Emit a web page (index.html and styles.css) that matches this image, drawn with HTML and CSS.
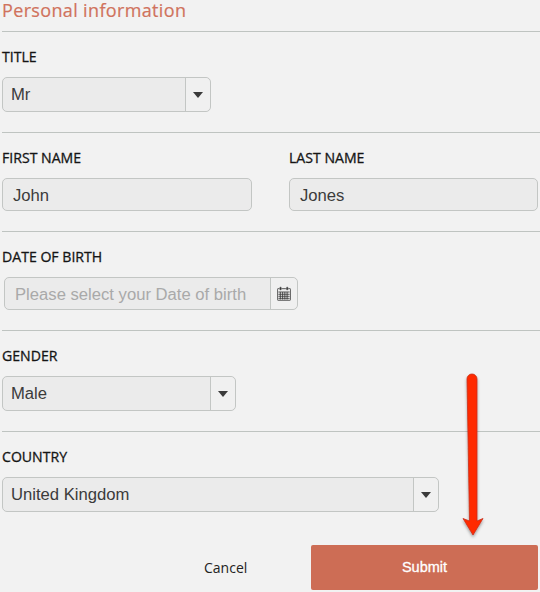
FILE: index.html
```html
<!DOCTYPE html>
<html lang="en">
<head>
<meta charset="utf-8">
<title>Personal information</title>
<link rel="stylesheet" href="styles.css">
</head>
<body>
<form class="form">
  <h2 class="heading">Personal information</h2>
  <section class="section s-title">
    <div class="label">Title</div>
    <div class="select w-title"><span class="value">Mr</span><span class="toggle"><i class="caret"></i></span></div>
  </section>
  <section class="section s-name">
    <div class="two">
      <div class="col-a">
        <div class="label">First name</div>
        <div class="input w-first"><span class="value-plain">John</span></div>
      </div>
      <div class="col-b">
        <div class="label">Last name</div>
        <div class="input w-last"><span class="value-plain">Jones</span></div>
      </div>
    </div>
  </section>
  <section class="section s-dob">
    <div class="label">Date of birth</div>
    <div class="date">
      <span class="placeholder">Please select your Date of birth</span>
      <span class="cal">
        <svg width="14" height="15" viewBox="0 0 13 14" aria-hidden="true">
          <path class="cal-body" d="M1 2.500h11a.7.7 0 0 1 .7.7v9.400a.7.7 0 0 1-.7.7H1a.7.7 0 0 1-.7-.7V3.200a.7.7 0 0 1 .7-.7z"/>
          <path class="cal-grid" d="M1.200 5.600h10.600M1.200 7.700h10.600M1.200 9.600h10.600M1.200 11.500h10.600M3.100 5.600v7M5.200 5.600v7M7.300 5.600v7M9.400 5.600v7"/>
          <rect class="cal-ring" x="2.300" y="0.800" width="2" height="3.200" rx="1"/>
          <rect class="cal-ring" x="8.500" y="0.800" width="2" height="3.200" rx="1"/>
        </svg>
      </span>
    </div>
  </section>
  <section class="section s-gender">
    <div class="label">Gender</div>
    <div class="select w-gender"><span class="value">Male</span><span class="toggle"><i class="caret"></i></span></div>
  </section>
  <section class="section s-country">
    <div class="label">Country</div>
    <div class="select w-country"><span class="value">United Kingdom</span><span class="toggle"><i class="caret"></i></span></div>
  </section>
  <div class="actions">
    <span class="cancel">Cancel</span>
    <span class="submit">Submit</span>
  </div>
</form>
<svg class="arrow" width="40" height="180" viewBox="0 0 40 180" aria-hidden="true">
  <defs>
    <filter id="shadow" x="-50%" y="-10%" width="200%" height="120%">
      <feDropShadow dx="0" dy="2" stdDeviation="1.500" flood-color="#000" flood-opacity="0.35"/>
    </filter>
  </defs>
  <path class="arrow-shape" filter="url(#shadow)" d="M15 9 a5 5 0 0 1 10 0 L25 151 L31 148.500 L21 165 L11 148.500 L17.500 151 Z"/>
</svg>
</body>
</html>
```
FILE: styles.css
```css
* { box-sizing: border-box; }
html, body { margin: 0; padding: 0; }
body {
  width: 540px;
  height: 592px;
  overflow: hidden;
  position: relative;
  background: #f2f2f2;
  font-family: "Open Sans", sans-serif;
  color: #111;
}
.form { padding-left: 2px; }
.heading {
  margin: 0;
  height: 32px;
  font-size: 18px;
  line-height: 21px;
  font-weight: 400;
  letter-spacing: 0.35px;
  color: #d0735d;
  border-bottom: 1px solid #bfc4c1;
  -webkit-text-stroke: 0.200px #d0735d;
}
.section { border-bottom: 1px solid #bfc4c1; }
.section.s-country { border-bottom: 0; }
.s-title { height: 101px; padding-top: 16px; }
.s-name { height: 99px; padding-top: 16px; }
.s-dob { height: 99px; padding-top: 16px; }
.s-gender { height: 101px; padding-top: 16px; }
.s-country { height: 113px; padding-top: 16px; }
.label {
  height: 18px;
  margin-bottom: 11px;
  font-size: 14.100px;
  line-height: 18px;
  font-weight: 400;
  text-transform: uppercase;
  color: #151515;
  -webkit-text-stroke: 0.300px #151515;
}
.two { display: flex; }
.col-a { width: 287px; }
.col-b { width: 249px; }
.select, .input, .date {
  display: flex;
  align-items: center;
  background: #ebebeb;
  border: 1px solid #c3c6c4;
  border-radius: 5px;
  font-family: "Liberation Sans", Arial, sans-serif;
  font-size: 16.650px;
  color: #3b3b3b;
}
.select { height: 35px; }
.value { flex: 1; padding: 1px 0 0 8px; }
.value-plain { padding-top: 2px; }
.toggle {
  width: 25px;
  height: 100%;
  display: flex;
  align-items: center;
  justify-content: center;
  border-left: 1px solid #c3c6c4;
  background: #f0f0f0;
  border-radius: 0 5px 5px 0;
}
.caret {
  display: block;
  width: 0;
  height: 0;
  border-left: 5.500px solid transparent;
  border-right: 5.500px solid transparent;
  border-top: 6px solid #3a3a3a;
}
.w-title { width: 209px; }
.w-gender { width: 234px; }
.w-country { width: 437px; }
.input { height: 33px; padding-left: 10px; }
.w-first { width: 250px; }
.w-last { width: 249px; }
.date {
  width: 294px;
  height: 33px;
  margin-left: 2px;
}
.placeholder { flex: 1; padding: 2px 0 0 10px; color: #a9a9a9; }
.cal {
  width: 27px;
  height: 100%;
  display: flex;
  align-items: center;
  justify-content: center;
  border-left: 1px solid #c3c6c4;
  background: #f0f0f0;
  border-radius: 0 5px 5px 0;
}
.cal-body { fill: #efefef; stroke: #3a3a3a; stroke-width: 0.800; }
.cal-grid { fill: none; stroke: #3a3a3a; stroke-width: 0.800; }
.cal-ring { fill: #3a3a3a; stroke: #f0f0f0; stroke-width: 0.300; }
.actions { display: flex; height: 45px; }
.cancel {
  width: 309px;
  padding-left: 202px;
  line-height: 46px;
  font-size: 14px;
  color: #222;
}
.submit {
  width: 227px;
  height: 45px;
  background: #cd6d55;
  border-radius: 2px;
  color: #fff;
  text-align: center;
  font-family: "Liberation Sans", Arial, sans-serif;
  font-size: 14.500px;
  font-weight: 400;
  line-height: 45px;
  -webkit-text-stroke: 0.300px #fff;
}
.arrow { position: absolute; left: 452px; top: 370px; }
.arrow-shape { fill: #ff2a00; stroke: #c9301a; stroke-width: 0.800; }
```
